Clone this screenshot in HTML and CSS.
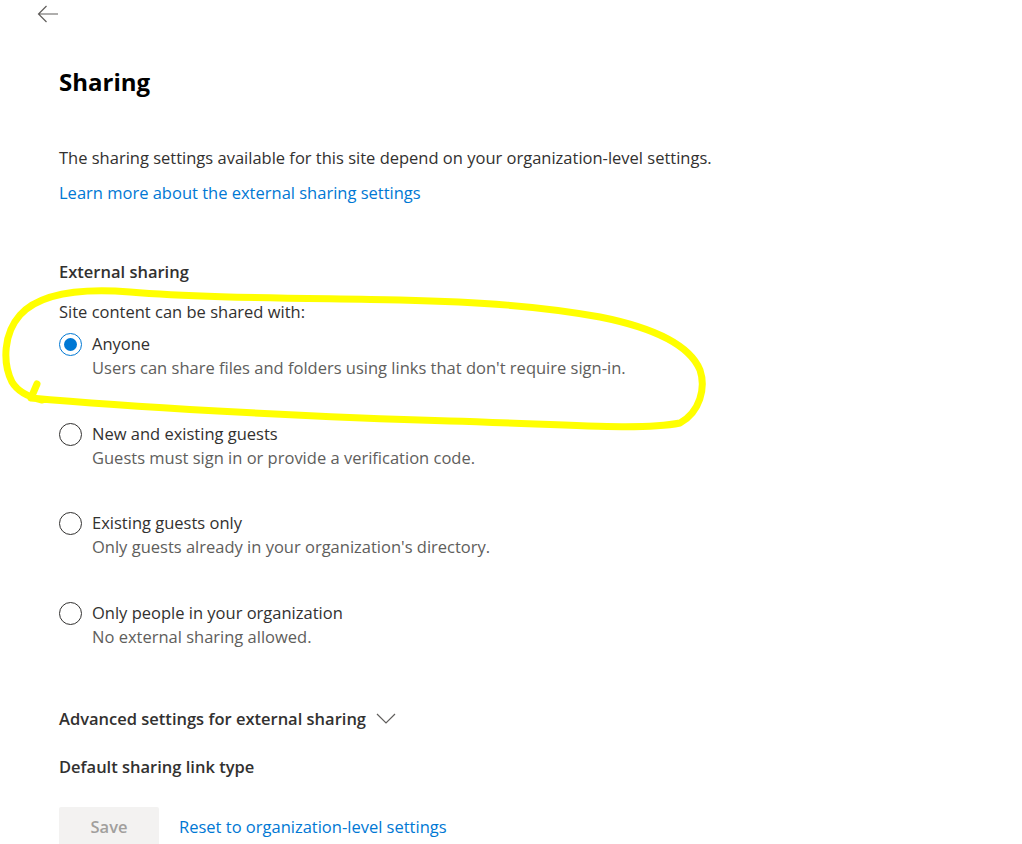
FILE: index.html
```html
<!DOCTYPE html>
<html lang="en">
<head>
    <meta charset="UTF-8">
    <meta name="viewport" content="width=device-width, initial-scale=1.0">
    <title>Sharing</title>
    <link rel="stylesheet" href="styles.css">
</head>
<body>
    <div class="topbar">
        <button class="back-button" aria-label="Back">
            <svg width="22" height="18" viewBox="0 0 22 18">
                <path d="M21 9 H1.5 M9.5 1 L1.5 9 L9.5 17" fill="none" stroke="#605e5c" stroke-width="1.2"/>
            </svg>
        </button>
    </div>
    <div class="content">
        <h1 class="title">Sharing</h1>
        <p class="intro">The sharing settings available for this site depend on your organization-level settings.</p>
        <a class="link" href="#">Learn more about the external sharing settings</a>

        <h2 class="section-title">External sharing</h2>
        <p class="group-label">Site content can be shared with:</p>

        <div class="options">
            <label class="option">
                <span class="radio checked"></span>
                <span class="option-text">
                    <span class="option-name">Anyone</span>
                    <span class="option-desc">Users can share files and folders using links that don't require sign-in.</span>
                </span>
            </label>
            <label class="option">
                <span class="radio"></span>
                <span class="option-text">
                    <span class="option-name">New and existing guests</span>
                    <span class="option-desc">Guests must sign in or provide a verification code.</span>
                </span>
            </label>
            <label class="option">
                <span class="radio"></span>
                <span class="option-text">
                    <span class="option-name">Existing guests only</span>
                    <span class="option-desc">Only guests already in your organization's directory.</span>
                </span>
            </label>
            <label class="option">
                <span class="radio"></span>
                <span class="option-text">
                    <span class="option-name">Only people in your organization</span>
                    <span class="option-desc">No external sharing allowed.</span>
                </span>
            </label>
        </div>

        <div class="advanced">
            <span>Advanced settings for external sharing</span>
            <svg width="20" height="12" viewBox="0 0 20 12">
                <path d="M1 1 L10 10 L19 1" fill="none" stroke="#605e5c" stroke-width="1.2"/>
            </svg>
        </div>
        <h2 class="subsection">Default sharing link type</h2>

        <div class="actions">
            <button class="save-button" disabled>Save</button>
            <a class="link" href="#">Reset to organization-level settings</a>
        </div>
    </div>

    <!-- hand-drawn highlight on top of the screenshot -->
    <svg class="scribble" width="1022" height="844" viewBox="0 0 1022 844">
        <path d="M37 384 L31 398
                 C 120 406, 300 417, 450 421
                 C 560 424, 640 431, 680 423
                 C 700 412, 706 388, 700 370
                 C 690 346, 655 328, 600 317
                 C 540 306, 480 302, 400 300
                 C 300 298, 200 298, 130 292
                 C 80 288, 40 293, 20 315
                 C 4 333, 2 362, 12 382
                 C 18 392, 28 397, 42 400"
              fill="none" stroke="#ffff00" stroke-width="7" stroke-linecap="round" stroke-linejoin="round"/>
    </svg>
</body>
</html>
```

FILE: styles.css
```css
body {
    margin: 0;
    padding: 0;
    background-color: #ffffff;
    font-family: "Segoe UI", "Open Sans", "Noto Sans", sans-serif;
    font-size: 16.5px;
    color: #323130;
    position: relative;
    overflow: hidden;
}
.topbar {
    height: 28px;
    padding-left: 37px;
    display: flex;
    align-items: center;
}
.back-button {
    border: none;
    background: none;
    padding: 0;
    display: flex;
    cursor: pointer;
}
.content {
    padding-left: 59px;
    display: flex;
    flex-direction: column;
    align-items: flex-start;
}
.title {
    margin: 38px 0 0 0;
    font-size: 24px;
    line-height: 32px;
    font-weight: 700;
    color: #000000;
}
.intro {
    margin: 48px 0 0 0;
    line-height: 24px;
}
.link {
    color: #0078d4;
    text-decoration: none;
    line-height: 24px;
}
.content > .link {
    margin-top: 11px;
}
.section-title {
    margin: 55px 0 0 0;
    font-size: 16.5px;
    line-height: 24px;
    font-weight: 600;
}
.group-label {
    margin: 16px 0 0 0;
    line-height: 24px;
}
.options {
    margin-top: 8px;
    display: flex;
    flex-direction: column;
    gap: 41.5px;
}
.option {
    display: flex;
    gap: 10px;
    cursor: pointer;
}
.radio {
    box-sizing: border-box;
    width: 23px;
    height: 23px;
    margin-top: 1px;
    border: 1px solid #323130;
    border-radius: 50%;
    display: flex;
    align-items: center;
    justify-content: center;
    flex-shrink: 0;
}
.radio.checked {
    border-color: #0078d4;
}
.radio.checked::after {
    content: "";
    width: 13px;
    height: 13px;
    border-radius: 50%;
    background-color: #0078d4;
}
.option-text {
    display: flex;
    flex-direction: column;
    line-height: 24px;
}
.option-desc {
    color: #605e5c;
}
.advanced {
    margin-top: 58px;
    display: flex;
    align-items: center;
    gap: 10px;
    font-weight: 600;
    line-height: 24px;
}
.subsection {
    margin: 24px 0 0 0;
    font-size: 16.5px;
    line-height: 24px;
    font-weight: 600;
}
.actions {
    margin-top: 28px;
    display: flex;
    align-items: center;
    gap: 20px;
}
.save-button {
    width: 100px;
    height: 40px;
    border: none;
    border-radius: 2px;
    background-color: #f3f2f1;
    color: #a19f9d;
    font-family: inherit;
    font-size: 16.5px;
    font-weight: 600;
}
.scribble {
    position: absolute;
    top: 0;
    left: 0;
    pointer-events: none;
}
```
